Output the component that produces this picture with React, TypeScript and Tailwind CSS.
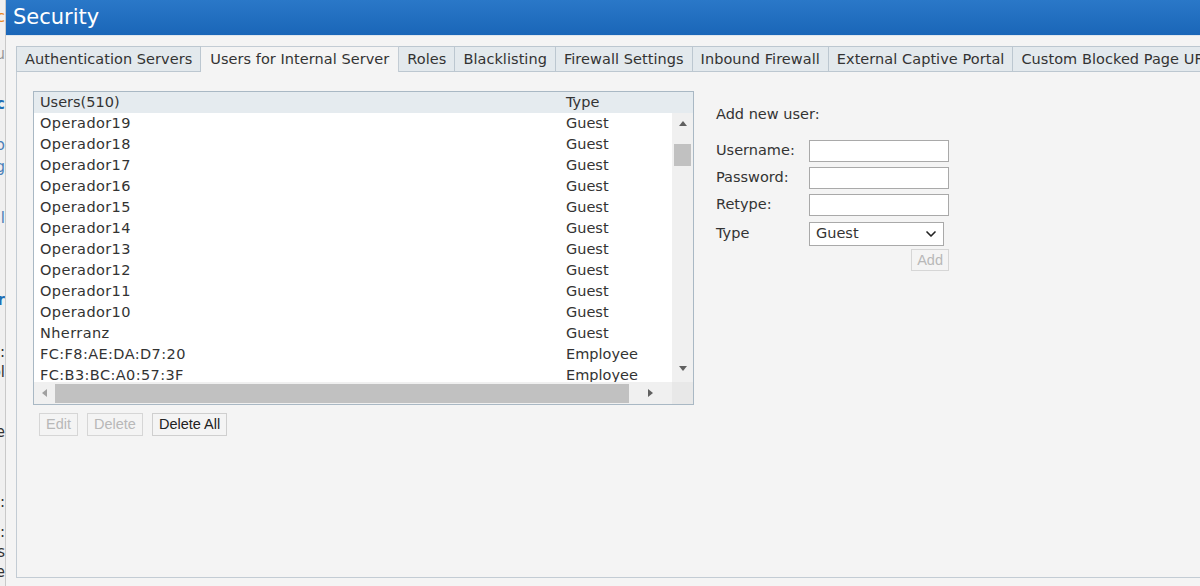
import { ChevronDown } from 'lucide-react'

const users: [string, string][] = [
  ['Operador19', 'Guest'],
  ['Operador18', 'Guest'],
  ['Operador17', 'Guest'],
  ['Operador16', 'Guest'],
  ['Operador15', 'Guest'],
  ['Operador14', 'Guest'],
  ['Operador13', 'Guest'],
  ['Operador12', 'Guest'],
  ['Operador11', 'Guest'],
  ['Operador10', 'Guest'],
  ['Nherranz', 'Guest'],
  ['FC:F8:AE:DA:D7:20', 'Employee'],
  ['FC:B3:BC:A0:57:3F', 'Employee'],
  ['FC:A1:3E:11:90:0B', 'Employee'],
]

const tabs = [
  'Authentication Servers',
  'Users for Internal Server',
  'Roles',
  'Blacklisting',
  'Firewall Settings',
  'Inbound Firewall',
  'External Captive Portal',
  'Custom Blocked Page URL',
]

// fragments of the page behind the dialog
const behind = [
  { t: 'c', c: 'text-[#e8891e]', h: 'h-[34px]' },
  { t: 'u', c: 'text-[#999]', h: 'h-[40px]' },
  { t: 'c', c: 'text-[#1f6fb5] font-bold', h: 'h-[60px]' },
  { t: 'o', c: 'text-[#4a7fb8]', h: 'h-[22px]' },
  { t: 'g', c: 'text-[#4a7fb8]', h: 'h-[22px]' },
  { t: 'l', c: 'text-[#4a7fb8]', h: 'h-[80px]' },
  { t: 'r', c: 'text-[#1f6fb5] font-bold', h: 'h-[84px]' },
  { t: ':', c: 'text-[#333]', h: 'h-[20px]' },
  { t: 'ol', c: 'text-[#333]', h: 'h-[20px]' },
  { t: 'e', c: 'text-[#333]', h: 'h-[100px]' },
  { t: ':', c: 'text-[#333]', h: 'h-[40px]' },
  { t: ':', c: 'text-[#333]', h: 'h-[20px]' },
  { t: 's', c: 'text-[#333]', h: 'h-[20px]' },
  { t: 'e', c: 'text-[#333]', h: 'h-[20px]' },
]

function Field({ label }: { label: string }) {
  return (
    <div className="flex items-center h-[27px]">
      <span className="w-[93px]">{label}</span>
      <div className="w-[140px] h-[22px] bg-white border border-[#a9a9a9]" />
    </div>
  )
}

export default function App() {
  return (
    <div className="flex w-[1200px] h-[586px] overflow-hidden bg-[#f6f6f6] font-['DejaVu_Sans',sans-serif] text-[#333]">
      <div className="w-[6px] shrink-0 overflow-hidden flex flex-col bg-[#f0f0f0] border-r border-[#c9c9c9]">
        {behind.map((b, i) => (
          <div key={i} className={`${b.h} flex items-center justify-end text-[15px] leading-none whitespace-nowrap ${b.c}`}>
            {b.t}
          </div>
        ))}
      </div>

      <div className="flex-1 flex flex-col min-w-0">
        <div className="h-[35px] shrink-0 bg-gradient-to-b from-[#2a78c8] to-[#1a66b8] text-white text-[21px] leading-none flex items-center pl-[7px] pb-[1px]">
          Security
        </div>
        <div className="flex-1 flex flex-col pl-[10px] pt-[10px] pb-[8px] bg-[#f4f4f4] border-t border-[#dfe6ee]">
          <div className="flex h-[26px] shrink-0 text-[14.5px] whitespace-nowrap tracking-[0.05px]">
            {tabs.map((t, i) =>
              i === 1 ? (
                <div key={t} className="px-[9px] flex items-center bg-[#f4f4f4] border-t border-r border-[#c3ccd4] pt-[1px]">
                  {t}
                </div>
              ) : (
                <div key={t} className={`px-[8px] flex items-center bg-[#e3e9ed] border-t border-b border-r border-[#bcc7d0] pt-[1px] ${i === 0 ? 'border-l' : ''}`}>
                  {t}
                </div>
              )
            )}
          </div>
          <div className="flex-1 flex border-l border-b border-[#c3ccd4] pl-[16px] pt-[19px]">
            <div className="flex flex-col">
              <div className="w-[661px] h-[314px] border border-[#a9b8c4] bg-white flex flex-col text-[14.5px]">
                <div className="h-[21px] shrink-0 flex items-center bg-[#e5ebef] pl-[6px]">
                  <span className="w-[526px]">Users(510)</span>
                  <span>Type</span>
                </div>
                <div className="flex-1 flex min-h-0">
                  <div className="flex-1 overflow-hidden">
                    {users.map(([name, type]) => (
                      <div key={name} className="h-[21px] flex items-center pl-[6px] whitespace-nowrap">
                        <span className="w-[526px] tracking-[0.4px]">{name}</span>
                        <span>{type}</span>
                      </div>
                    ))}
                  </div>
                  <div className="w-[21px] shrink-0 bg-[#f0f0f0] flex flex-col items-center">
                    <div className="h-[21px] flex items-center justify-center">
                      <div className="w-0 h-0 border-l-[4px] border-r-[4px] border-b-[5px] border-l-transparent border-r-transparent border-b-[#606060]" />
                    </div>
                    <div className="w-[17px] h-[22px] bg-[#c1c1c1] mt-[10px]" />
                    <div className="flex-1" />
                    <div className="h-[21px] flex items-center justify-center mb-[3px]">
                      <div className="w-0 h-0 border-l-[4px] border-r-[4px] border-t-[5px] border-l-transparent border-r-transparent border-t-[#606060]" />
                    </div>
                  </div>
                </div>
                <div className="h-[22px] shrink-0 flex bg-[#f0f0f0]">
                  <div className="w-[21px] flex items-center justify-center">
                    <div className="w-0 h-0 border-t-[4px] border-b-[4px] border-r-[5px] border-t-transparent border-b-transparent border-r-[#a0a0a0]" />
                  </div>
                  <div className="w-[574px] h-[19px] bg-[#c1c1c1] self-center" />
                  <div className="flex-1 flex items-center justify-center">
                    <div className="w-0 h-0 border-t-[4px] border-b-[4px] border-l-[5px] border-t-transparent border-b-transparent border-l-[#606060]" />
                  </div>
                  <div className="w-[21px] bg-[#e8e8e8]" />
                </div>
              </div>
              <div className="flex gap-[9px] mt-[8px] pl-[6px] font-['Liberation_Sans',sans-serif] text-[14.5px]">
                <button className="h-[23px] px-[6px] border border-[#d6d6d6] bg-[#f4f4f4] text-[#b8b8b8]">Edit</button>
                <button className="h-[23px] px-[6px] border border-[#d6d6d6] bg-[#f4f4f4] text-[#b8b8b8]">Delete</button>
                <button className="h-[23px] px-[6px] border border-[#cfcfcf] bg-[#f4f4f4] text-[#222]">Delete All</button>
              </div>
            </div>

            <div className="flex flex-col ml-[22px] pt-[13px] text-[14.5px]">
              <div className="mb-[12px]">Add new user:</div>
              <Field label="Username:" />
              <Field label="Password:" />
              <Field label="Retype:" />
              <div className="flex items-center h-[30px]">
                <span className="w-[93px]">Type</span>
                <div className="w-[135px] h-[24px] bg-white border border-[#a9a9a9] flex items-center justify-between pl-[6px] pr-[4px]">
                  <span>Guest</span>
                  <ChevronDown size={16} strokeWidth={2.5} className="text-[#222]" />
                </div>
              </div>
              <div className="flex justify-end w-[233px]">
                <button className="h-[22px] px-[5px] border border-[#d6d6d6] bg-[#f4f4f4] text-[#b8b8b8] font-['Liberation_Sans',sans-serif]">Add</button>
              </div>
            </div>
          </div>
        </div>
      </div>
    </div>
  )
}
